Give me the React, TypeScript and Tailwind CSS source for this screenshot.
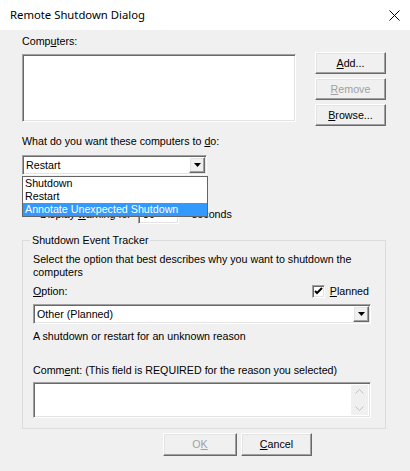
import React from "react";

const sunken =
  "border border-t-[#a0a0a0] border-l-[#a0a0a0] border-b-white border-r-white shadow-[inset_1px_1px_#696969,inset_-1px_-1px_#e3e3e3]";

const raised =
  "border border-t-white border-l-white border-b-[#696969] border-r-[#696969] shadow-[inset_-1px_-1px_#a0a0a0,inset_1px_1px_#e3e3e3] bg-[#f0f0f0]";

function cn(...parts: (string | undefined | false)[]) {
  return parts.filter(Boolean).join(" ");
}

function DownArrow() {
  return (
    <svg width="7" height="4" viewBox="0 0 7 4">
      <path d="M0 0h7L3.5 4z" fill="#000" />
    </svg>
  );
}

function ArrowButton() {
  return (
    <div
      className={`flex h-[16px] w-[16px] items-center justify-center ${raised}`}
    >
      <DownArrow />
    </div>
  );
}

function Combo({ value, width }: { value: string; width: string }) {
  return (
    <div
      className={`flex h-[20px] items-center justify-between bg-white pl-[3px] pr-[1px] ${width} ${sunken}`}
    >
      <span>{value}</span>
      <ArrowButton />
    </div>
  );
}

function Checkbox({ checked }: { checked?: boolean }) {
  return (
    <div
      className={`flex h-[13px] w-[13px] shrink-0 items-center justify-center bg-white ${sunken}`}
    >
      {checked && (
        <svg width="9" height="9" viewBox="0 0 9 9">
          <path d="M1 4l2 2 5-5" stroke="#000" strokeWidth="2" fill="none" />
        </svg>
      )}
    </div>
  );
}

function Button({
  children,
  disabled,
  className,
}: {
  children: React.ReactNode;
  disabled?: boolean;
  className?: string;
}) {
  return (
    <div
      className={cn(
        "flex items-center justify-center",
        raised,
        disabled ? "text-[#a0a0a0]" : "text-black",
        className,
      )}
    >
      {children}
    </div>
  );
}

export default function App() {
  return (
    <div className="relative h-[471px] w-[410px] overflow-hidden bg-[#f0f0f0] font-['Liberation_Sans',Arial,sans-serif] text-[10.7px] leading-[13px] text-black">
      {/* title bar */}
      <div className="flex h-[30px] items-center justify-between bg-white pl-[10px] pr-[10px]">
        <span className="font-['Noto_Sans',sans-serif] text-[11.3px] leading-[16px]">
          Remote Shutdown Dialog
        </span>
        <svg width="11" height="11" viewBox="0 0 11 11">
          <path d="M0.5 0.5l10 10M10.5 0.5l-10 10" stroke="#000" strokeWidth="1" />
        </svg>
      </div>

      <div className="pl-[22px] pr-[24px]">
        {/* computers */}
        <div className="mt-[5px] flex justify-between">
          <div className="w-[274px]">
            <div>
              Comp<u>u</u>ters:
            </div>
            <div className={`mt-[6px] h-[68px] bg-white ${sunken}`} />
          </div>
          <div className="mt-[17px] flex w-[71px] flex-col gap-[4px]">
            <Button className="h-[22px]">
              <span>
                <u>A</u>dd...
              </span>
            </Button>
            <Button className="h-[22px]" disabled>
              <span>
                <u>R</u>emove
              </span>
            </Button>
            <Button className="h-[22px]">
              <span>
                <u>B</u>rowse...
              </span>
            </Button>
          </div>
        </div>

        {/* action */}
        <div className="mt-[9px]">
          What do you want these computers to <u>d</u>o:
        </div>
        <div className="relative mt-[7px] w-[185px]">
          <Combo value="Restart" width="w-[185px]" />
          <div className="absolute left-0 top-[21px] z-10 w-[186px] border border-[#646464] bg-white">
            <div className="h-[13px] pl-[2px]">Shutdown</div>
            <div className="h-[13px] pl-[2px]">Restart</div>
            <div className="h-[13px] bg-[#3399ff] pl-[2px] text-white">
              Annotate Unexpected Shutdown
            </div>
          </div>
        </div>

        {/* warning row (mostly hidden by the open list) */}
        <div className="mt-[29px] flex h-[20px] items-center pl-[18px]">
          <span className="w-[98px]">
            Display <u>w</u>arning for
          </span>
          <div
            className={`flex h-[20px] w-[41px] items-center bg-white pl-[4px] ${sunken}`}
          >
            30
          </div>
          <span className="ml-[13px]">seconds</span>
        </div>

        {/* group */}
        <div className="relative mt-[16px] border border-[#dcdcdc] pb-[10px] pl-[10px] pr-[14px] pt-[12px]">
          <div className="absolute left-[7px] top-[-7px] bg-[#f0f0f0] px-[2px]">
            Shutdown Event Tracker
          </div>
          <div>
            Select the option that best describes why you want to shutdown the
            <br />
            computers
          </div>
          <div className="mt-[5px] flex h-[14px] items-center justify-between">
            <span className="pt-[1px]">
              <u>O</u>ption:
            </span>
            <div className="flex items-center pr-[2px]">
              <Checkbox checked />
              <span className="ml-[5px]">
                <u>P</u>lanned
              </span>
            </div>
          </div>
          <div className="mt-[6px]">
            <Combo value="Other (Planned)" width="w-full" />
          </div>
          <div className="mt-[6px]">
            A shutdown or restart for an unknown reason
          </div>
          <div className="mt-[21px]">
            Comm<u>e</u>nt: (This field is REQUIRED for the reason you selected)
          </div>
          <div
            className={`mt-[5px] flex h-[36px] justify-end bg-white p-[2px] ${sunken}`}
          >
            <div className="flex w-[17px] flex-col items-center justify-between bg-[#f0f0f0] py-[4px]">
              <svg width="9" height="5" viewBox="0 0 9 5">
                <path d="M0.5 4.5l4-4 4 4" stroke="#c0c0c0" fill="none" />
              </svg>
              <svg width="9" height="5" viewBox="0 0 9 5">
                <path d="M0.5 0.5l4 4 4-4" stroke="#c0c0c0" fill="none" />
              </svg>
            </div>
          </div>
        </div>

        {/* bottom buttons */}
        <div className="ml-[141px] mt-[4px] flex gap-[4px]">
          <Button className="h-[23px] w-[74px]" disabled>
            <span>
              O<u>K</u>
            </span>
          </Button>
          <Button className="h-[23px] w-[71px]">
            <span>
              <u>C</u>ancel
            </span>
          </Button>
        </div>
      </div>
    </div>
  );
}
